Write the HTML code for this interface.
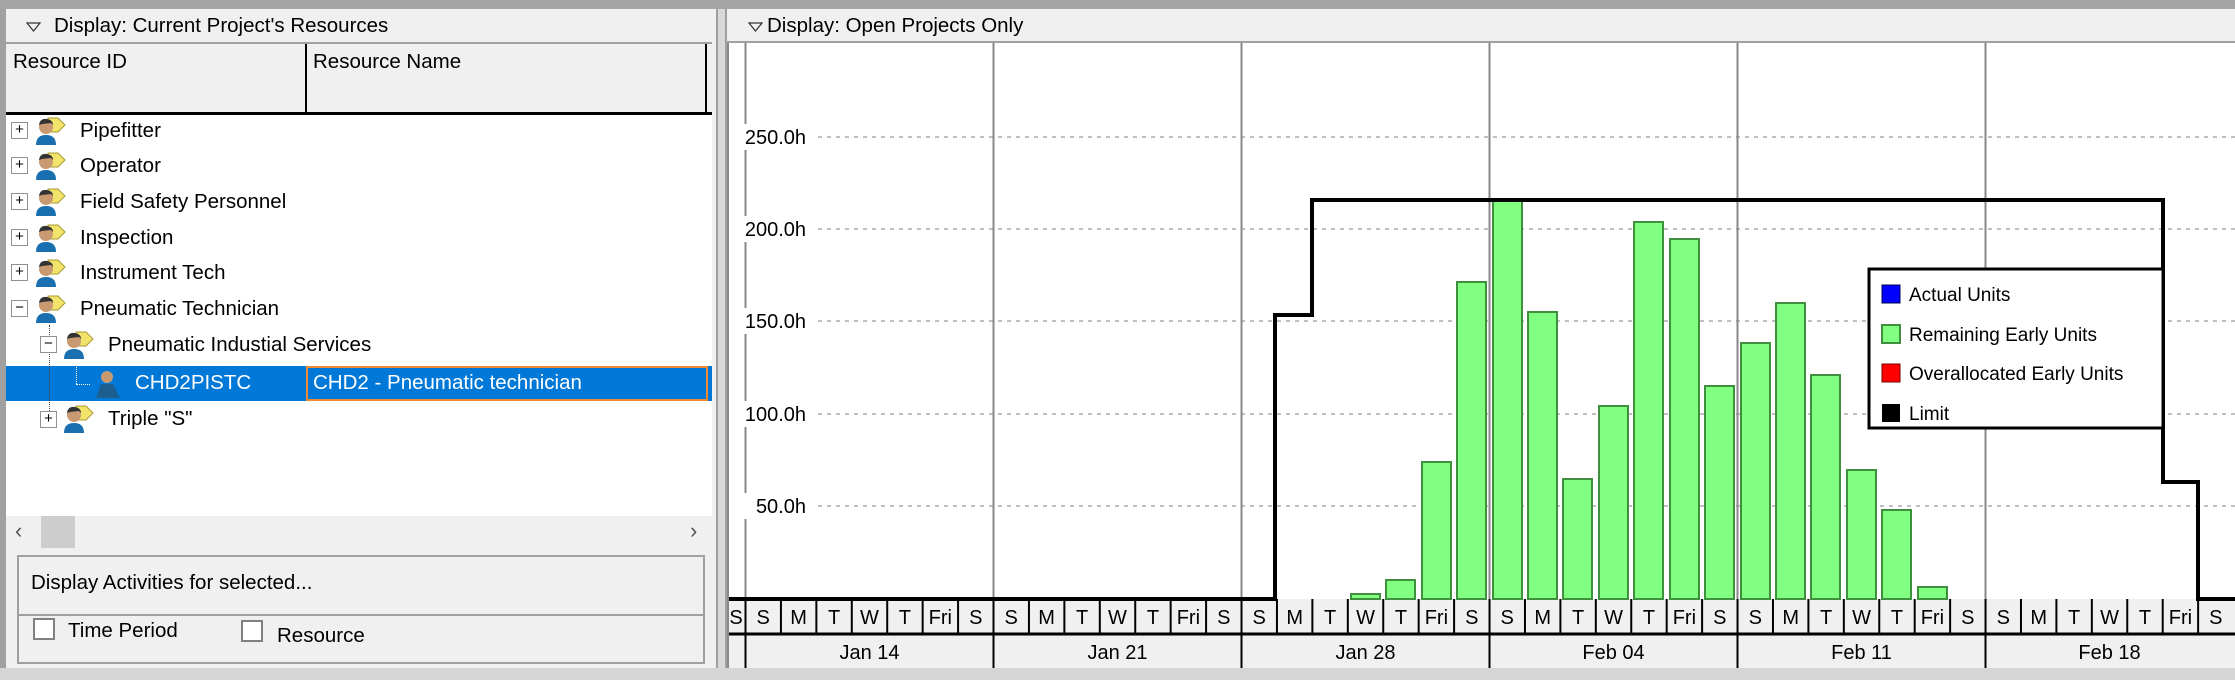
<!DOCTYPE html>
<html><head><meta charset="utf-8"><style>
body{margin:0;width:2235px;height:680px;overflow:hidden;background:#d4d4d4;font-family:"Liberation Sans",sans-serif;position:relative}
.a{position:absolute}
.t{font-size:20.5px;color:#000;white-space:nowrap}
.pb{position:absolute;width:15px;height:15px;border:1px solid #909090;background:#fff;font-size:15px;line-height:14px;text-align:center;color:#000}
</style></head><body>
<!-- left pane -->
<div class="a" style="left:0;top:0;width:716px;height:668px;background:#f0f0f0;border-left:6px solid #a0a0a0;box-sizing:border-box"></div>
<div class="a" style="left:0;top:0;width:2235px;height:9px;background:#a5a5a5"></div>
<div class="a" style="left:6px;top:9px;width:706px;height:33px;background:#f0f0f0;border-bottom:2px solid #a0a0a0"></div>
<svg class="a" style="left:26px;top:21px" width="16" height="12"><path d="M1 2 L14 2 L7.5 10 Z" fill="none" stroke="#333" stroke-width="1.2"/></svg>
<div class="a t" style="left:54px;top:14px">Display: Current Project's Resources</div>
<div class="a" style="left:6px;top:44px;width:706px;height:68px;background:#f0f0f0;border-bottom:3px solid #000"></div>
<div class="a" style="left:305px;top:44px;width:2px;height:68px;background:#000"></div>
<div class="a" style="left:705px;top:44px;width:2px;height:68px;background:#000"></div>
<div class="a t" style="left:13px;top:50px">Resource ID</div>
<div class="a t" style="left:313px;top:50px">Resource Name</div>
<div class="a" style="left:6px;top:115px;width:706px;height:401px;background:#fff"></div>
<!-- selected row -->
<div class="a" style="left:6px;top:366px;width:706px;height:35px;background:#0078d7"></div>
<div class="a" style="left:306px;top:366px;width:402px;height:35px;border:2px solid #f08a30;box-sizing:border-box"></div>
<div class="a" style="left:49px;top:325px;width:0;height:98px;border-left:1px dotted #444"></div>
<div class="a" style="left:76px;top:360px;width:0;height:24px;border-left:1px dotted #fff"></div>
<div class="a" style="left:76px;top:384px;width:14px;border-top:1px dotted #fff"></div>
<svg width="0" height="0" style="position:absolute"><defs>
<g id="ic"><path d="M14 2 L24 2 L31 9 L24 16 L14 16 Z" fill="#f2e36a" stroke="#a89a30"/><circle cx="12" cy="11" r="7" fill="#c99a72"/><path d="M5 9 Q6 2 13 3 Q19 4 19 9 L17 7 L8 8 Z" fill="#333"/><path d="M2 29 Q2 19 12 19 Q22 19 22 29 Z" fill="#1a6fb0"/></g>
</defs></svg>
<div class="pb" style="left:11px;top:122px">+</div><svg class="a" style="left:34px;top:116px" width="34" height="30"><use href="#ic"/></svg><div class="a t" style="left:80px;top:119px">Pipefitter</div>
<div class="pb" style="left:11px;top:157px">+</div><svg class="a" style="left:34px;top:151px" width="34" height="30"><use href="#ic"/></svg><div class="a t" style="left:80px;top:154px">Operator</div>
<div class="pb" style="left:11px;top:193px">+</div><svg class="a" style="left:34px;top:187px" width="34" height="30"><use href="#ic"/></svg><div class="a t" style="left:80px;top:190px">Field Safety Personnel</div>
<div class="pb" style="left:11px;top:229px">+</div><svg class="a" style="left:34px;top:223px" width="34" height="30"><use href="#ic"/></svg><div class="a t" style="left:80px;top:226px">Inspection</div>
<div class="pb" style="left:11px;top:264px">+</div><svg class="a" style="left:34px;top:258px" width="34" height="30"><use href="#ic"/></svg><div class="a t" style="left:80px;top:261px">Instrument Tech</div>
<div class="pb" style="left:11px;top:300px">−</div><svg class="a" style="left:34px;top:294px" width="34" height="30"><use href="#ic"/></svg><div class="a t" style="left:80px;top:297px">Pneumatic Technician</div>
<div class="pb" style="left:40px;top:336px">−</div><svg class="a" style="left:62px;top:330px" width="34" height="30"><use href="#ic"/></svg><div class="a t" style="left:108px;top:333px">Pneumatic Industial Services</div>
<svg class="a" style="left:92px;top:369px" width="32" height="30"><circle cx="15" cy="8" r="6" fill="#c99a72"/><path d="M4 29 L9 15 L21 15 L28 29 Z" fill="#1a5f90"/></svg>
<div class="a t" style="left:135px;top:371px;color:#fff">CHD2PISTC</div>
<div class="a t" style="left:313px;top:371px;color:#fff">CHD2 - Pneumatic technician</div>
<div class="pb" style="left:40px;top:411px">+</div><svg class="a" style="left:62px;top:404px" width="34" height="30"><use href="#ic"/></svg><div class="a t" style="left:108px;top:407px">Triple "S"</div>
<!-- scrollbar -->
<div class="a" style="left:6px;top:516px;width:706px;height:32px;background:#f0f0f0"></div>
<div class="a" style="left:41px;top:516px;width:34px;height:32px;background:#cdcdcd"></div>
<div class="a" style="left:15px;top:518px;font-size:22px;color:#555">‹</div>
<div class="a" style="left:690px;top:518px;font-size:22px;color:#555">›</div>
<div class="a" style="left:17px;top:555px;width:688px;height:109px;border:2px solid #a0a0a0;box-sizing:border-box;background:#f0f0f0"></div>
<div class="a" style="left:19px;top:557px;width:684px;height:57px;border-bottom:2px solid #a0a0a0"></div>
<div class="a t" style="left:31px;top:571px">Display Activities for selected...</div>
<div class="a" style="left:33px;top:618px;width:22px;height:22px;background:#fff;border:2px solid #808080;box-sizing:border-box"></div>
<div class="a t" style="left:68px;top:619px">Time Period</div>
<div class="a" style="left:241px;top:620px;width:22px;height:22px;background:#fff;border:2px solid #808080;box-sizing:border-box"></div>
<div class="a t" style="left:277px;top:624px">Resource</div>
<div class="a" style="left:0;top:668px;width:2235px;height:12px;background:#d6d6d6"></div>
<div class="a" style="left:716px;top:9px;width:11px;height:659px;background:#d8d8d8;border-left:2px solid #a0a0a0;border-right:2px solid #a0a0a0;box-sizing:border-box"></div>
<!-- right pane -->
<div class="a" style="left:727px;top:9px;width:1508px;height:34px;background:#f0f0f0;border-bottom:2px solid #a0a0a0;box-sizing:border-box"></div>
<svg class="a" style="left:748px;top:21px" width="16" height="12"><path d="M1 2 L14 2 L7.5 10 Z" fill="none" stroke="#333" stroke-width="1.2"/></svg>
<div class="a t" style="left:767px;top:14px">Display: Open Projects Only</div>
<svg class="a" style="left:0;top:0" width="2235" height="680" font-family="Liberation Sans, sans-serif">
<rect x="727" y="43" width="1508" height="556" fill="#fff"/>
<rect x="727" y="599" width="1508" height="69" fill="#f0f0f0"/>
<g stroke="#c0c0c0" stroke-width="2" stroke-dasharray="4,5">
<line x1="818" y1="137" x2="2235" y2="137"/><line x1="818" y1="229" x2="2235" y2="229"/><line x1="818" y1="321" x2="2235" y2="321"/><line x1="818" y1="414" x2="2235" y2="414"/><line x1="818" y1="506" x2="2235" y2="506"/></g>
<g stroke="#888" stroke-width="2">
<line x1="745.5" y1="43" x2="745.5" y2="668"/><line x1="993.5" y1="43" x2="993.5" y2="668"/><line x1="1241.5" y1="43" x2="1241.5" y2="668"/><line x1="1489.5" y1="43" x2="1489.5" y2="668"/><line x1="1737.5" y1="43" x2="1737.5" y2="668"/><line x1="1985.5" y1="43" x2="1985.5" y2="668"/></g>
<g fill="#fff"><rect x="735" y="124" width="74" height="26"/><rect x="735" y="216" width="74" height="26"/><rect x="735" y="308" width="74" height="26"/><rect x="735" y="401" width="74" height="26"/><rect x="735" y="493" width="74" height="26"/></g>
<g font-size="20" text-anchor="end" fill="#000"><text x="806" y="144">250.0h</text><text x="806" y="236">200.0h</text><text x="806" y="328">150.0h</text><text x="806" y="421">100.0h</text><text x="806" y="513">50.0h</text></g>
<g fill="#80ff80" stroke="#3f8f3f" stroke-width="2">
<rect x="1351" y="594" width="29" height="5"/><rect x="1386" y="580" width="29" height="19"/><rect x="1422" y="462" width="29" height="137"/><rect x="1457" y="282" width="29" height="317"/>
<rect x="1493" y="200" width="29" height="399"/><rect x="1528" y="312" width="29" height="287"/><rect x="1563" y="479" width="29" height="120"/><rect x="1599" y="406" width="29" height="193"/><rect x="1634" y="222" width="29" height="377"/><rect x="1670" y="239" width="29" height="360"/><rect x="1705" y="386" width="29" height="213"/>
<rect x="1741" y="343" width="29" height="256"/><rect x="1776" y="303" width="29" height="296"/><rect x="1811" y="375" width="29" height="224"/><rect x="1847" y="470" width="29" height="129"/><rect x="1882" y="510" width="29" height="89"/><rect x="1918" y="587" width="29" height="12"/></g>
<polyline points="727,599 1275,599 1275,315 1312,315 1312,200 2163,200 2163,482 2198,482 2198,599 2235,599" fill="none" stroke="#000" stroke-width="4"/>
<line x1="727" y1="634" x2="2235" y2="634" stroke="#000" stroke-width="3"/>
<g stroke="#000" stroke-width="2" id="dl"></g>
<g font-size="20" text-anchor="middle" fill="#000" id="dt"></g>
<g font-size="20" text-anchor="middle" fill="#000"><text x="869.5" y="659">Jan 14</text><text x="1117.5" y="659">Jan 21</text><text x="1365.5" y="659">Jan 28</text><text x="1613.5" y="659">Feb 04</text><text x="1861.5" y="659">Feb 11</text><text x="2109.5" y="659">Feb 18</text></g>
<g stroke="#000" stroke-width="2"><line x1="745.5" y1="634" x2="745.5" y2="668"/><line x1="993.5" y1="634" x2="993.5" y2="668"/><line x1="1241.5" y1="634" x2="1241.5" y2="668"/><line x1="1489.5" y1="634" x2="1489.5" y2="668"/><line x1="1737.5" y1="634" x2="1737.5" y2="668"/><line x1="1985.5" y1="634" x2="1985.5" y2="668"/></g>
<rect x="1869" y="269" width="294" height="159" fill="#fff" stroke="#000" stroke-width="3"/>
<rect x="1882" y="285" width="18" height="18" fill="#0000ff" stroke="#000050"/><rect x="1882" y="325" width="18" height="18" fill="#80ff80" stroke="#3f8f3f" stroke-width="2"/><rect x="1882" y="364" width="18" height="18" fill="#ff0000" stroke="#700"/><rect x="1882" y="404" width="18" height="18" fill="#000"/>
<g font-size="19" fill="#000"><text x="1909" y="301">Actual Units</text><text x="1909" y="341">Remaining Early Units</text><text x="1909" y="380">Overallocated Early Units</text><text x="1909" y="420">Limit</text></g>
<line x1="728" y1="43" x2="728" y2="668" stroke="#888" stroke-width="2"/>
</svg>
<script>
var dl=document.getElementById('dl'),dt=document.getElementById('dt'),n='http://www.w3.org/2000/svg';
var L=['S','M','T','W','T','Fri','S'];
for(var k=-1;k<42;k++){var x=745.5+35.43*k;
if(k>=0){var l=document.createElementNS(n,'line');l.setAttribute('x1',x);l.setAttribute('x2',x);l.setAttribute('y1',599);l.setAttribute('y2',634);dl.appendChild(l);}
var t=document.createElementNS(n,'text');t.setAttribute('x',k<0?736:x+17.7);t.setAttribute('y',624);t.textContent=L[(k+7)%7];dt.appendChild(t);}
</script>
</body></html>
